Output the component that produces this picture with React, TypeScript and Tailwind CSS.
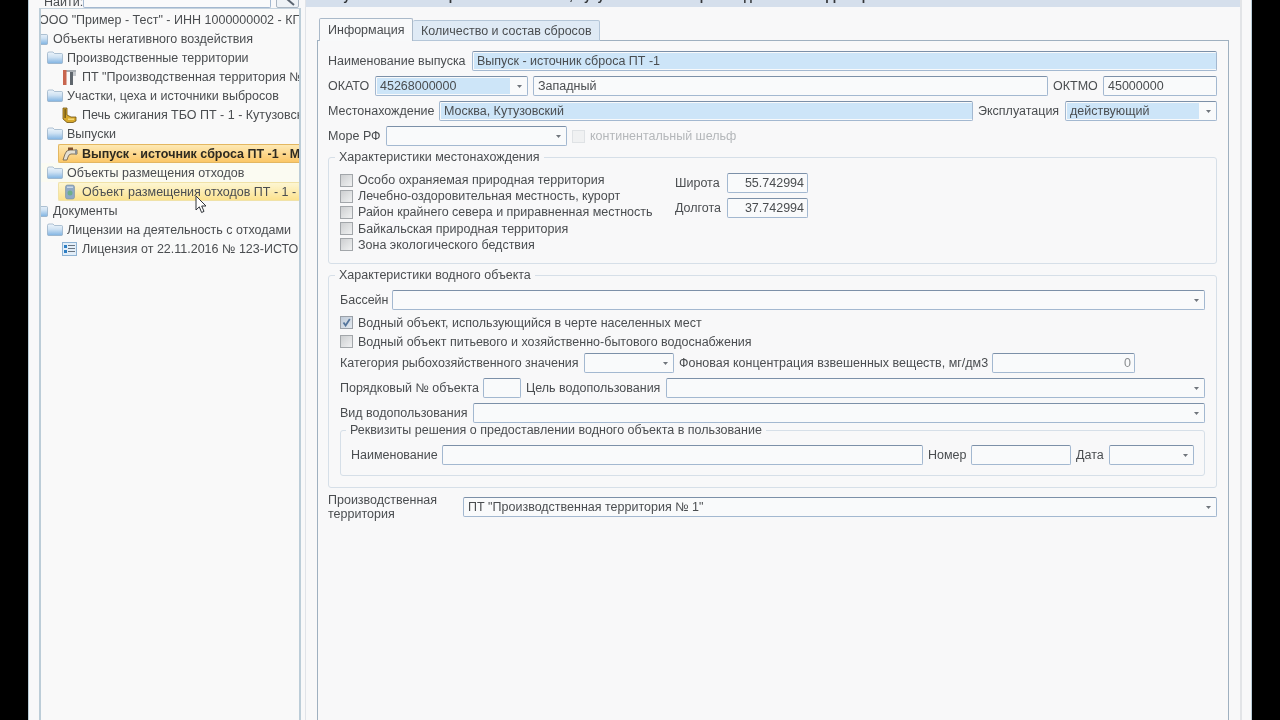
import type { ReactNode } from "react";

const fieldBorder = "border border-[#a3b8d0] border-t-[#7c90a8] rounded-[2px] bg-[#f9fafb]";

function Arrow() {
  return (
    <svg width="5" height="3" viewBox="0 0 5 3" className="shrink-0">
      <polygon points="0,0 5,0 2.5,3" fill="#6f757c" />
    </svg>
  );
}

function Field({
  value,
  className = "",
  fill = false,
  combo = false,
  right = false,
}: {
  value?: string;
  className?: string;
  fill?: boolean;
  combo?: boolean;
  right?: boolean;
}) {
  return (
    <div className={`flex h-[20px] items-center ${fieldBorder} ${className}`}>
      <div
        className={`flex h-[16px] min-w-0 flex-1 items-center whitespace-nowrap pl-[3px] ${
          fill ? "ml-[1px] bg-[#cde5f8]" : "ml-[1px]"
        } ${right ? "justify-end pr-[3px]" : ""}`}
      >
        {value}
      </div>
      {combo && (
        <div className="flex w-[17px] shrink-0 items-center justify-end pr-[5px]">
          <Arrow />
        </div>
      )}
    </div>
  );
}

function Check({ label, checked = false, disabled = false }: { label: string; checked?: boolean; disabled?: boolean }) {
  return (
    <div className="flex items-center gap-[5px] whitespace-nowrap">
      <div
        className={`flex h-[13px] w-[13px] shrink-0 items-center justify-center border ${
          disabled
            ? "border-[#dfe2e5] bg-[#f0f1f2]"
            : checked
              ? "border-[#9aa0a8] bg-gradient-to-br from-[#bfcbd9] to-[#e4e9ef]"
              : "border-[#a2a6aa] bg-gradient-to-br from-[#cdcfd1] to-[#f0f1f2]"
        }`}
      >
        {checked && (
          <svg width="9" height="9" viewBox="0 0 9 9">
            <path d="M1.5 4.5 L3.6 7.5 L7.8 1" fill="none" stroke="#54759c" strokeWidth="1.8" />
          </svg>
        )}
      </div>
      <span className={disabled ? "text-[#b4b7ba]" : ""}>{label}</span>
    </div>
  );
}

function Group({ title, className = "", children }: { title: string; className?: string; children: ReactNode }) {
  return (
    <fieldset className={`rounded-[3px] border border-[#d6dfe8] ${className}`}>
      <legend className="-ml-[5px] h-[16px] whitespace-nowrap px-[4px] leading-[16px]">{title}</legend>
      {children}
    </fieldset>
  );
}

function FolderIcon({ className = "" }: { className?: string }) {
  return (
    <svg width="16" height="13" viewBox="0 0 16 13" className={`shrink-0 ${className}`}>
      <defs>
        <linearGradient id="folderFill" x1="0" y1="0" x2="0" y2="1">
          <stop offset="0" stopColor="#eef5fb" />
          <stop offset="0.45" stopColor="#cfe2f3" />
          <stop offset="1" stopColor="#7fb3e2" />
        </linearGradient>
      </defs>
      <path
        d="M0.5 2.5 Q0.5 1 2 1 H6 L7.5 2.5 H14.5 Q15.5 2.5 15.5 3.5 V11.5 Q15.5 12.5 14.5 12.5 H1.5 Q0.5 12.5 0.5 11.5 Z"
        fill="url(#folderFill)"
        stroke="#8fa9c2"
        strokeWidth="0.7"
      />
    </svg>
  );
}

function TerritoryIcon() {
  return (
    <svg width="15" height="16" viewBox="0 0 15 16" className="shrink-0">
      <rect x="1" y="1" width="13" height="2" fill="#a8adb2" />
      <rect x="1" y="1" width="3.5" height="15" fill="#c8664f" />
      <rect x="8" y="3" width="3" height="13" fill="#5f666d" />
      <rect x="11" y="3" width="3" height="4" fill="#c4c8cc" />
    </svg>
  );
}

function FurnaceIcon() {
  return (
    <svg width="15" height="16" viewBox="0 0 15 16" className="shrink-0">
      <path d="M1 1 H5 V8 L9 10 H14 V14 L11 15.5 H5 L1 12 Z" fill="#d8a92c" stroke="#6e5212" strokeWidth="0.8" />
      <rect x="2.5" y="2" width="1.2" height="9" fill="#5c4610" />
      <rect x="6" y="11.5" width="6" height="1.5" fill="#f3d777" />
    </svg>
  );
}

function PipeIcon() {
  return (
    <svg width="16" height="14" viewBox="0 0 16 14" className="shrink-0">
      <path d="M1 13 L3 7 Q4 3 8 3 H15 V7 H9 Q7 7 6 10 L5 13 Z" fill="#e4dfd2" stroke="#6b5a45" strokeWidth="0.8" />
      <rect x="6" y="0.5" width="5" height="2.5" fill="#7d4f2c" />
      <rect x="13" y="2.5" width="2" height="5" fill="#8a8f94" />
    </svg>
  );
}

function StorageIcon() {
  return (
    <svg width="12" height="16" viewBox="0 0 12 16" className="shrink-0">
      <rect x="1.5" y="1" width="9" height="14" rx="2" fill="#8fa9c4" stroke="#7b8da0" strokeWidth="0.6" />
      <circle cx="6" cy="9" r="2.5" fill="#6fae8a" />
      <rect x="3" y="2.5" width="6" height="1.5" fill="#c9d8e6" />
    </svg>
  );
}

function LicenseIcon() {
  return (
    <svg width="15" height="14" viewBox="0 0 15 14" className="shrink-0">
      <rect x="0.5" y="0.5" width="14" height="13" fill="#e3eef8" stroke="#8fb3d3" />
      <rect x="2" y="3" width="3" height="3" fill="#2f7fc4" />
      <rect x="2" y="8" width="3" height="3" fill="#2f7fc4" />
      <rect x="6" y="3" width="7" height="1" fill="#6a7580" />
      <rect x="6" y="6" width="7" height="1" fill="#6a7580" />
      <rect x="6" y="9" width="7" height="1" fill="#6a7580" />
    </svg>
  );
}

function TreeRow({
  icon,
  text,
  className = "",
  textClass = "",
}: {
  icon?: ReactNode;
  text: string;
  className?: string;
  textClass?: string;
}) {
  return (
    <div className={`flex h-[19px] items-center whitespace-nowrap ${className}`}>
      {icon}
      <span className={textClass}>{text}</span>
    </div>
  );
}

export default function App() {
  return (
    <div className="flex h-[720px] w-[1280px] overflow-hidden bg-black px-[28px] font-['Liberation_Sans',Arial,sans-serif] text-[12.5px] leading-[20px] text-[#4a4d50]">
      <div className="flex w-full border-x border-x-[#b9ccd8] bg-[#f8f8f9] blur-[0.35px]">
        {/* left pane */}
        <div className="flex w-[276px] shrink-0 flex-col pl-[10px] pr-[4px]">
          <div className="flex h-[8px] shrink-0 items-end overflow-hidden">
            <span className="ml-[5px] w-[39px] shrink-0 translate-y-[4px]">Найти:</span>
            <div className={`h-[20px] w-[188px] shrink-0 ${fieldBorder}`} />
            <div className="ml-[5px] flex h-[20px] w-[23px] shrink-0 items-end justify-end overflow-hidden rounded-[2px] border border-[#a9b5c2] bg-[#eef2f6] pb-[1px] pr-[2px]">
              <svg width="10" height="7" viewBox="0 0 10 7">
                <path d="M1 0 L8 6" stroke="#5a6470" strokeWidth="2" />
              </svg>
            </div>
          </div>
          <div className="relative min-h-0 flex-1 overflow-hidden border-x-2 border-t border-x-[#bccdd8] border-t-[#c5d3de] bg-[#f9f9f9] pt-[1px]">
            <TreeRow text={'ООО "Пример - Тест" - ИНН 1000000002 - КПП'} textClass="-ml-[2px]" />
            <TreeRow icon={<FolderIcon className="-ml-[9px] mr-[5px]" />} text="Объекты негативного воздействия" />
            <TreeRow icon={<FolderIcon className="ml-[6px] mr-[4px]" />} text="Производственные территории" />
            <TreeRow icon={<span className="ml-[21px] mr-[5px] flex"><TerritoryIcon /></span>} text={'ПТ "Производственная территория № 1"'} />
            <TreeRow icon={<FolderIcon className="ml-[6px] mr-[4px]" />} text="Участки, цеха и источники выбросов" />
            <TreeRow icon={<span className="ml-[21px] mr-[5px] flex"><FurnaceIcon /></span>} text="Печь сжигания ТБО ПТ - 1  - Кутузовский" />
            <TreeRow icon={<FolderIcon className="ml-[6px] mr-[4px]" />} text="Выпуски" />
            <div className="ml-[17px] mt-[1px] flex h-[19px] items-center whitespace-nowrap rounded-l-[2px] border border-r-0 border-[#e3b761] bg-gradient-to-b from-[#fde9b4] to-[#fbc766] pl-[3px] font-bold text-[#2e2a20]">
              <span className="mr-[4px] flex"><PipeIcon /></span>
              Выпуск - источник сброса ПТ -1  - Москва
            </div>
            <TreeRow icon={<FolderIcon className="ml-[6px] mr-[4px]" />} text="Объекты размещения отходов" className="bg-[#fbfbf2]" />
            <div className="ml-[17px] flex h-[19px] items-center whitespace-nowrap rounded-l-[2px] border border-r-0 border-[#f0e2a8] bg-gradient-to-b from-[#fdf6d2] to-[#fce28e] pl-[5px]">
              <span className="mr-[6px] flex"><StorageIcon /></span>
              Объект размещения отходов ПТ - 1  - Москва
            </div>
            <TreeRow icon={<FolderIcon className="-ml-[9px] mr-[5px]" />} text="Документы" />
            <TreeRow icon={<FolderIcon className="ml-[6px] mr-[4px]" />} text="Лицензии на деятельность с отходами" />
            <TreeRow icon={<span className="ml-[21px] mr-[5px] flex"><LicenseIcon /></span>} text="Лицензия от 22.11.2016 № 123-ИСТОЧНИК" />
            <svg width="12" height="20" viewBox="0 0 12 20" className="absolute left-[154px] top-[186px]">
              <path d="M1 1 V15 L4.3 11.8 L6.6 17.5 L9 16.4 L6.7 11 H11 Z" fill="#ffffff" stroke="#30343a" strokeWidth="1" />
            </svg>
          </div>
        </div>
        {/* right pane */}
        <div className="flex min-w-0 flex-1 flex-col border-l border-l-[#e0e3e8]">
          <div className="h-[7px] shrink-0 overflow-hidden bg-[#d5dfec] pl-[10px]">
            <div className="-mt-[12px] h-[16px] whitespace-nowrap font-bold leading-[16px] text-[#34373a]">
              Выпуск - источник сброса ПТ -1  - Москва, Кутузовский  - ПТ "Производственная территория № 1"
            </div>
          </div>
          <div className="flex min-h-0 flex-1 flex-col pl-[11px] pr-[11px] pt-[11px]">
            <div className="z-10 -mb-[1px] flex h-[23px] shrink-0 items-end pl-[2px]">
              <div className="flex h-[23px] w-[94px] items-center rounded-t-[2px] border border-b-0 border-[#aab9c9] bg-[#f8f9fa] pl-[8px]">
                Информация
              </div>
              <div className="flex h-[21px] w-[187px] items-center rounded-t-[2px] border border-l-0 border-[#b4c6d8] bg-[#dfeaf5] pl-[8px]">
                Количество и состав сбросов
              </div>
            </div>
            <div className="flex min-h-0 flex-1 flex-col border border-b-0 border-[#9fb0c0] pl-[10px] pr-[11px] pt-[10px]">
              <div className="flex h-[20px] items-center">
                <span className="w-[144px] shrink-0 whitespace-nowrap">Наименование выпуска</span>
                <Field value="Выпуск - источник сброса ПТ -1" fill className="flex-1" />
              </div>
              <div className="mt-[5px] flex h-[20px] items-center">
                <span className="w-[47px] shrink-0">ОКАТО</span>
                <Field value="45268000000" fill combo className="w-[153px] shrink-0" />
                <Field value="Западный" className="ml-[5px] w-[515px] shrink-0" />
                <span className="ml-[5px] w-[50px] shrink-0">ОКТМО</span>
                <Field value="45000000" className="flex-1" />
              </div>
              <div className="mt-[5px] flex h-[20px] items-center">
                <span className="w-[111px] shrink-0">Местонахождение</span>
                <Field value="Москва, Кутузовский" fill className="w-[534px] shrink-0" />
                <span className="ml-[5px] w-[87px] shrink-0">Эксплуатация</span>
                <Field value="действующий" fill combo className="flex-1" />
              </div>
              <div className="mt-[5px] flex h-[20px] items-center">
                <span className="w-[58px] shrink-0">Море РФ</span>
                <Field combo className="w-[181px] shrink-0" />
                <div className="ml-[5px]">
                  <Check label="континентальный шельф" disabled />
                </div>
              </div>

              <Group title="Характеристики местонахождения" className="mt-[3px] h-[115px] pl-[11px] pr-[9px] pt-[7px]">
                <div className="flex">
                  <div className="w-[335px] shrink-0">
                    {[
                      "Особо охраняемая природная территория",
                      "Лечебно-оздоровительная местность, курорт",
                      "Район крайнего севера и приравненная местность",
                      "Байкальская природная территория",
                      "Зона экологического бедствия",
                    ].map((item) => (
                      <div key={item} className="flex h-[16.2px] items-center">
                        <Check label={item} />
                      </div>
                    ))}
                  </div>
                  <div className="mt-[1px] flex w-[133px] flex-col gap-[5px]">
                    <div className="flex h-[20px] items-center">
                      <span className="w-[52px] shrink-0">Широта</span>
                      <Field value="55.742994" right className="w-[81px] shrink-0" />
                    </div>
                    <div className="flex h-[20px] items-center">
                      <span className="w-[52px] shrink-0">Долгота</span>
                      <Field value="37.742994" right className="w-[81px] shrink-0" />
                    </div>
                  </div>
                </div>
              </Group>

              <Group title="Характеристики водного объекта" className="mt-[3px] pb-[11px] pl-[11px] pr-[11px] pt-[7px]">
                <div className="flex h-[20px] items-center">
                  <span className="w-[52px] shrink-0">Бассейн</span>
                  <Field combo className="flex-1" />
                </div>
                <div className="mt-[3px] flex h-[19px] items-center">
                  <Check label="Водный объект, использующийся в черте населенных мест" checked />
                </div>
                <div className="flex h-[19px] items-center">
                  <Check label="Водный объект питьевого и хозяйственно-бытового водоснабжения" />
                </div>
                <div className="mt-[2px] flex h-[20px] items-center">
                  <span className="w-[244px] shrink-0 whitespace-nowrap">Категория рыбохозяйственного значения</span>
                  <Field combo className="w-[90px] shrink-0" />
                  <span className="ml-[5px] w-[313px] shrink-0 whitespace-nowrap">Фоновая концентрация взвешенных веществ, мг/дм3</span>
                  <Field value="0" right className="w-[143px] shrink-0 text-[#8a8d90]" />
                </div>
                <div className="mt-[5px] flex h-[20px] items-center">
                  <span className="w-[143px] shrink-0 whitespace-nowrap">Порядковый № объекта</span>
                  <Field className="w-[38px] shrink-0" />
                  <span className="ml-[5px] w-[140px] shrink-0 whitespace-nowrap">Цель водопользования</span>
                  <Field combo className="flex-1" />
                </div>
                <div className="mt-[5px] flex h-[20px] items-center">
                  <span className="w-[133px] shrink-0 whitespace-nowrap">Вид водопользования</span>
                  <Field combo className="flex-1" />
                </div>
                <Group title="Реквизиты решения о предоставлении водного объекта в пользование" className="-mt-[1px] pb-[10px] pl-[10px] pr-[10px] pt-[7px]">
                  <div className="flex h-[20px] items-center">
                    <span className="w-[91px] shrink-0">Наименование</span>
                    <Field className="w-[481px] shrink-0" />
                    <span className="ml-[5px] w-[43px] shrink-0">Номер</span>
                    <Field className="w-[100px] shrink-0" />
                    <span className="ml-[5px] w-[33px] shrink-0">Дата</span>
                    <Field combo className="flex-1" />
                  </div>
                </Group>
              </Group>

              <div className="mt-[9px] flex h-[20px] items-center">
                <span className="w-[135px] shrink-0 leading-[14px]">Производственная территория</span>
                <Field value={'ПТ "Производственная территория № 1"'} combo className="flex-1" />
              </div>
            </div>
          </div>
        </div>
        <div className="w-[11px] shrink-0 border-l-2 border-l-[#e2e4e7]" />
      </div>
    </div>
  );
}
